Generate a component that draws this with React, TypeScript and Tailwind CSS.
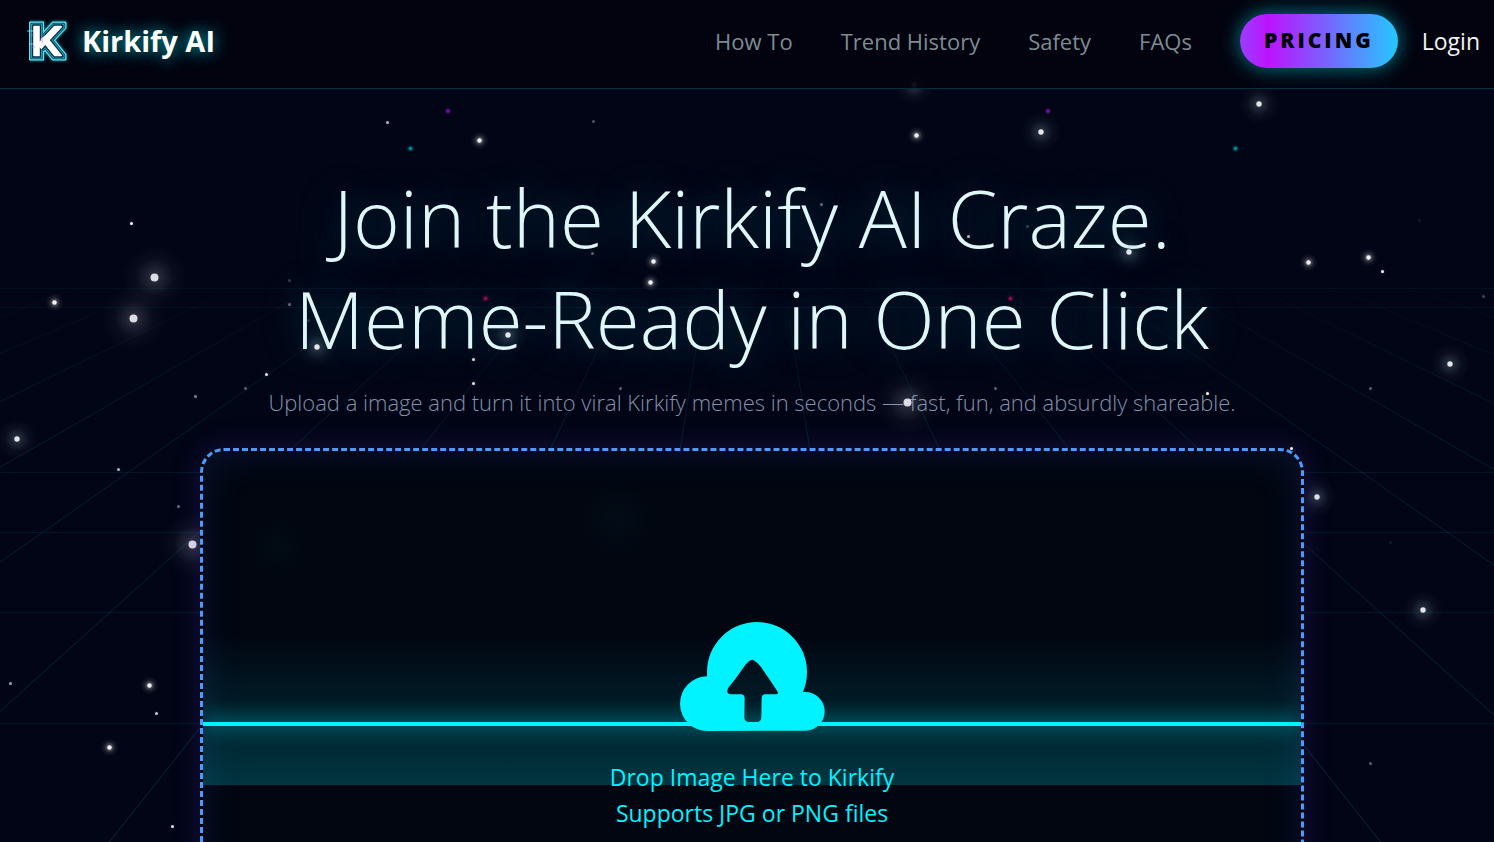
import { clsx } from "clsx";

type StarKind = "dot" | "tight" | "medium" | "large" | "purple" | "teal" | "red";

interface Star {
  x: number;
  y: number;
  kind: StarKind;
  opacity?: number;
}

const STARS: Star[] = [
  { x: 131, y: 223, kind: "dot" },
  { x: 154, y: 277, kind: "large" },
  { x: 54, y: 302, kind: "tight" },
  { x: 133, y: 318, kind: "large" },
  { x: 289, y: 280, kind: "dot", opacity: 0.2 },
  { x: 289, y: 304, kind: "dot", opacity: 0.4 },
  { x: 308, y: 320, kind: "dot", opacity: 0.15 },
  { x: 266, y: 374, kind: "dot", opacity: 0.9 },
  { x: 245, y: 388, kind: "dot", opacity: 0.35 },
  { x: 195, y: 396, kind: "dot", opacity: 0.5 },
  { x: 16, y: 438, kind: "medium" },
  { x: 118, y: 469, kind: "dot", opacity: 0.7 },
  { x: 178, y: 506, kind: "dot", opacity: 0.4 },
  { x: 192, y: 544, kind: "large" },
  { x: 10, y: 683, kind: "dot", opacity: 0.6 },
  { x: 149, y: 685, kind: "tight" },
  { x: 156, y: 713, kind: "dot", opacity: 0.8 },
  { x: 109, y: 747, kind: "tight" },
  { x: 172, y: 826, kind: "dot", opacity: 0.9 },
  { x: 387, y: 122, kind: "dot", opacity: 0.7 },
  { x: 447, y: 110, kind: "purple" },
  { x: 479, y: 140, kind: "tight" },
  { x: 410, y: 148, kind: "teal" },
  { x: 593, y: 121, kind: "dot", opacity: 0.3 },
  { x: 913, y: 84, kind: "medium" },
  { x: 916, y: 135, kind: "tight" },
  { x: 1047, y: 110, kind: "purple" },
  { x: 1040, y: 131, kind: "medium" },
  { x: 1235, y: 148, kind: "teal" },
  { x: 1258, y: 103, kind: "medium" },
  { x: 653, y: 261, kind: "tight" },
  { x: 650, y: 282, kind: "tight" },
  { x: 592, y: 253, kind: "dot", opacity: 0.35 },
  { x: 485, y: 298, kind: "red" },
  { x: 1010, y: 298, kind: "red" },
  { x: 507, y: 334, kind: "medium" },
  { x: 316, y: 346, kind: "medium" },
  { x: 473, y: 359, kind: "dot", opacity: 0.85 },
  { x: 473, y: 383, kind: "dot", opacity: 0.9 },
  { x: 620, y: 388, kind: "dot", opacity: 0.35 },
  { x: 821, y: 204, kind: "dot", opacity: 0.4 },
  { x: 968, y: 236, kind: "dot", opacity: 0.7 },
  { x: 1027, y: 226, kind: "dot", opacity: 0.2 },
  { x: 1128, y: 251, kind: "medium" },
  { x: 907, y: 402, kind: "large" },
  { x: 995, y: 388, kind: "dot", opacity: 0.35 },
  { x: 1207, y: 393, kind: "dot" },
  { x: 1308, y: 262, kind: "tight" },
  { x: 1368, y: 257, kind: "tight" },
  { x: 1382, y: 271, kind: "dot" },
  { x: 1419, y: 220, kind: "dot", opacity: 0.08 },
  { x: 1483, y: 296, kind: "dot", opacity: 0.25 },
  { x: 1449, y: 363, kind: "medium" },
  { x: 1370, y: 388, kind: "dot", opacity: 0.35 },
  { x: 1291, y: 448, kind: "dot" },
  { x: 1316, y: 496, kind: "medium" },
  { x: 1390, y: 542, kind: "dot", opacity: 0.08 },
  { x: 1422, y: 609, kind: "medium" },
  { x: 1370, y: 763, kind: "dot", opacity: 0.35 },
];

const STAR_STYLE: Record<StarKind, { core: number; glow: number; fill: string; halo: string }> = {
  dot: { core: 1.5, glow: 5, fill: "#ffffff", halo: "url(#halo-faint)" },
  tight: { core: 2.2, glow: 9, fill: "#f1f1f4", halo: "url(#halo-tight)" },
  medium: { core: 2.7, glow: 20, fill: "#e4e6ea", halo: "url(#halo-cool)" },
  large: { core: 4, glow: 32, fill: "#dcdce4", halo: "url(#halo-grey)" },
  purple: { core: 1.8, glow: 4.5, fill: "#6a0e9c", halo: "url(#halo-purple)" },
  teal: { core: 1.8, glow: 4.5, fill: "#08848e", halo: "url(#halo-teal)" },
  red: { core: 1.8, glow: 4.5, fill: "#960a48", halo: "url(#halo-red)" },
};

const HALOS = [
  { id: "halo-faint", color: "#ffffff", opacity: 0.12 },
  { id: "halo-tight", color: "#ffffff", opacity: 0.5 },
  { id: "halo-cool", color: "#9fc0cc", opacity: 0.28 },
  { id: "halo-grey", color: "#b4b4c4", opacity: 0.26 },
  { id: "halo-purple", color: "#8a14c8", opacity: 0.8 },
  { id: "halo-teal", color: "#00b4be", opacity: 0.8 },
  { id: "halo-red", color: "#d00a5a", opacity: 0.8 },
];

// Floor grid: rays fan out from one vanishing point above the horizon.
const VANISH = { x: 745, y: 40 };
const RAYS = Array.from({ length: 28 }, (_, i) => (i - 13.5) * 0.317);
const ROWS = [288, 307, 472, 532, 612, 723];

const NAV_LINKS = [
  { label: "How To", href: "#how-to" },
  { label: "Trend History", href: "#trend-history" },
  { label: "Safety", href: "#safety" },
  { label: "FAQs", href: "#faqs" },
];

function Starfield() {
  return (
    <svg
      className="pointer-events-none absolute inset-0 h-full w-full"
      viewBox="0 0 1494 842"
      preserveAspectRatio="xMidYMin slice"
      aria-hidden="true"
    >
      <defs>
        {HALOS.map((h) => (
          <radialGradient key={h.id} id={h.id}>
            <stop offset="0" stopColor={h.color} stopOpacity={h.opacity} />
            <stop offset="0.3" stopColor={h.color} stopOpacity={h.opacity * 0.55} />
            <stop offset="0.6" stopColor={h.color} stopOpacity={h.opacity * 0.16} />
            <stop offset="1" stopColor={h.color} stopOpacity="0" />
          </radialGradient>
        ))}
        <linearGradient id="floor-fade" gradientUnits="userSpaceOnUse" x1="0" y1="260" x2="0" y2="842">
          <stop offset="0" stopColor="#00f3ff" stopOpacity="0" />
          <stop offset="0.3" stopColor="#00f3ff" stopOpacity="0.1" />
          <stop offset="1" stopColor="#00f3ff" stopOpacity="0.15" />
        </linearGradient>
      </defs>
      <g stroke="url(#floor-fade)" strokeWidth="1">
        {RAYS.map((slope) => (
          <line
            key={slope}
            x1={VANISH.x + slope * (262 - VANISH.y)}
            y1={262}
            x2={VANISH.x + slope * (842 - VANISH.y)}
            y2={842}
          />
        ))}
      </g>
      {ROWS.map((y) => (
        <rect key={y} x="-500" y={y} width="2494" height="1" fill="#00f3ff" fillOpacity={y < 400 ? 0.05 : 0.08} />
      ))}
      {STARS.map((s) => {
        const look = STAR_STYLE[s.kind];
        // medium and purple stars sit on whole pixels, the rest on pixel centres
        const shift = s.kind === "medium" || s.kind === "purple" ? 1 : 0.5;
        return (
          <g key={`${s.x}-${s.y}`} opacity={s.opacity ?? 1}>
            <circle cx={s.x + shift} cy={s.y + shift} r={look.glow} fill={look.halo} />
            <circle cx={s.x + shift} cy={s.y + shift} r={look.core} fill={look.fill} />
          </g>
        );
      })}
    </svg>
  );
}

// Neon mark: the same three bars stacked in shrinking widths, cut flat by a shrinking box.
const MARK_LAYERS = [
  { id: "mark-glow", color: "#18c4d4", width: 16, blurred: true },
  { id: "mark-edge", color: "#62e2ea", width: 15 },
  { id: "mark-gap", color: "#0b5570", width: 12.6 },
  { id: "mark-line", color: "#3fc4d8", width: 10.6 },
  { id: "mark-inner", color: "#06304c", width: 9.4 },
  { id: "mark-core", color: "#ffffff", width: 6.6 },
];

function LogoMark() {
  return (
    <svg className="h-11 w-11" viewBox="0 0 44 44" fill="none" aria-hidden="true">
      <defs>
        <filter id="logo-glow" x="-20%" y="-20%" width="140%" height="140%">
          <feGaussianBlur stdDeviation="1.5" />
        </filter>
        {MARK_LAYERS.map((layer) => {
          const inset = (16 - layer.width) / 2;
          return (
            <clipPath key={layer.id} id={layer.id}>
              <rect x={2 + inset} y={2 + inset} width={39 - inset * 2} height={40 - inset * 2} rx="1.5" />
            </clipPath>
          );
        })}
      </defs>
      {MARK_LAYERS.map((layer) => (
        <g key={layer.id} filter={layer.blurred ? "url(#logo-glow)" : undefined} opacity={layer.blurred ? 0.6 : 1}>
          <g clipPath={`url(#${layer.id})`} stroke={layer.color} strokeWidth={layer.width}>
            <line x1="10.5" y1="0" x2="10.5" y2="44" />
            <line x1="39" y1="0" x2="13" y2="28" />
            <line x1="17" y1="18" x2="38" y2="44" />
          </g>
        </g>
      ))}
      <g stroke="#b46cf0" strokeWidth="0.8" opacity="0.8">
        <path d="M4 16H8M5 28H9M16 18V24" />
      </g>
      <g stroke="#7ff4fa" strokeWidth="0.8">
        <path d="M1 12H8M3 25H7" />
      </g>
    </svg>
  );
}

function CloudUpload() {
  return (
    <svg width="145" height="109" viewBox="297 69 435 327" fill="#00f3ff" aria-hidden="true">
      <path
        fillRule="evenodd"
        d="M380 396A82 82 0 0 1 378 232L378 219A150 150 0 0 1 678 219Q678 250 666 279L673 279A58 58 0 0 1 673 395ZM514 182Q504 182 490 202Q468 235 441 268Q434 284 448 286L480 286Q491 287 491 298L490 354Q490 368 502 369L528 369Q540 368 541 356L542 296Q542 286 552 286L585 286Q594 285 589 277Q566 240 540 204Q524 184 514 182Z"
      />
    </svg>
  );
}

function Header() {
  return (
    <header className="relative z-20 border-b border-[#04303c] bg-[#02030f]/95">
      <div className="flex h-22 items-center justify-between pr-3.5 pb-1.5 pl-6.5">
        <a href="#top" className="flex items-center gap-3">
          <LogoMark />
          <span className="text-[29px] font-bold text-white [text-shadow:0_0_16px_#00c8d4]">
            Kirkify AI
          </span>
        </a>
        <nav className="flex items-center gap-12 text-[22px] text-[#7e8b93]">
          {NAV_LINKS.map((link) => (
            <a key={link.href} href={link.href}>
              {link.label}
            </a>
          ))}
          <div className="flex items-center gap-6">
            <a
              href="#pricing"
              className="flex h-[54px] items-center rounded-full bg-[linear-gradient(90deg,#9a3dff_0%,#bc13fe_18%,#24c8ff_100%)] px-6 text-[21px] font-extrabold tracking-[3px] text-black shadow-[0_0_20px_#00808c]"
            >
              PRICING
            </a>
            <a href="#login" className="text-[23px] text-[#f1f3f5]">
              Login
            </a>
          </div>
        </nav>
      </div>
    </header>
  );
}

function DropZone() {
  return (
    <label
      className={clsx(
        "relative z-10 mt-7 flex h-[560px] w-full max-w-[1104px] cursor-pointer flex-col items-center",
        "overflow-hidden rounded-3xl border-3 border-dashed border-[#4a9aff] bg-[#010611] pt-[171px]",
        "bg-[radial-gradient(circle_at_414px_68px,#030c16,transparent_40px),radial-gradient(circle_at_74px_96px,#020b14,transparent_32px)]",
        "shadow-[0_0_30px_rgba(99,60,220,0.22),inset_0_0_40px_rgba(80,100,220,0.15)]"
      )}
    >
      <input type="file" accept="image/png,image/jpeg" className="sr-only" />
      <div className="absolute inset-x-0 top-[184px] h-[150px] bg-linear-to-b from-[#00f3ff]/0 to-[#00f3ff]/20" />
      <div className="absolute inset-x-0 top-[271px] h-1 bg-[#00f3ff] shadow-[0_0_20px_#00f3ff]" />
      <div className="relative">
        <CloudUpload />
      </div>
      <div className="relative mt-7 text-center text-[23px] leading-9 text-[#00f3ff]">
        <p>Drop Image Here to Kirkify</p>
        <p>Supports JPG or PNG files</p>
      </div>
    </label>
  );
}

export default function App() {
  return (
    <div
      id="top"
      className="relative h-screen overflow-hidden bg-[#020515] font-['Open_Sans','Noto_Sans',sans-serif]"
    >
      <Header />
      <main className="flex flex-col items-center px-6 pt-[77px] pl-8.5">
        <h1 className="text-center text-[80px] leading-[101px] font-light text-[#e0f7fa] [text-shadow:0_0_40px_rgba(0,200,220,0.4)]">
          Join the Kirkify AI Craze.
          <br />
          Meme-Ready in One Click
        </h1>
        <p className="mt-4 text-center text-[22px] leading-9 font-light text-[#8291ac]">
          Upload a image and turn it into viral Kirkify memes in seconds — fast, fun, and absurdly shareable.
        </p>
        <DropZone />
      </main>
      <Starfield />
    </div>
  );
}
